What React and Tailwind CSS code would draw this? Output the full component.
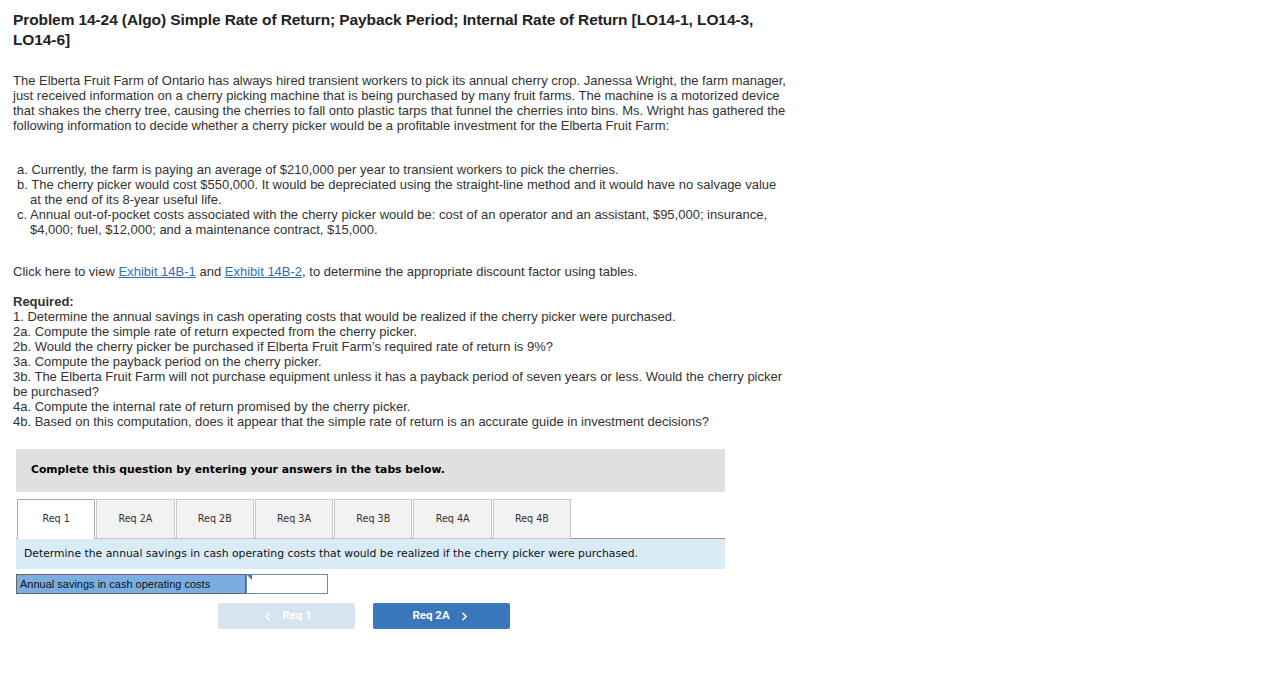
import React from 'react';
import { ChevronLeft, ChevronRight } from 'lucide-react';

const body = { fontFamily: '"Liberation Sans", Arial, sans-serif' };
const verdana = { fontFamily: '"DejaVu Sans", Verdana, sans-serif' };

const tabs = ['Req 1', 'Req 2A', 'Req 2B', 'Req 3A', 'Req 3B', 'Req 4A', 'Req 4B'];

export default function App() {
  return (
    <div className="min-h-[691px] w-[1270px] bg-white text-[#333]" style={body}>
      <div className="w-[795px] pl-[13px] pt-[10px]">
        <h1 className="text-[15.5px] leading-[20px] font-bold tracking-[-0.1px] text-[#222]">
          Problem 14-24 (Algo) Simple Rate of Return; Payback Period; Internal Rate of Return [LO14-1, LO14-3, LO14-6]
        </h1>

        <p className="mt-[23px] text-[13px] leading-[15px]">
          The Elberta Fruit Farm of Ontario has always hired transient workers to pick its annual cherry crop. Janessa Wright, the farm manager,
          just received information on a cherry picking machine that is being purchased by many fruit farms. The machine is a motorized device
          that shakes the cherry tree, causing the cherries to fall onto plastic tarps that funnel the cherries into bins. Ms. Wright has gathered the
          following information to decide whether a cherry picker would be a profitable investment for the Elberta Fruit Farm:
        </p>

        <ol className="mt-[29px] ml-[4px] pr-[10px] text-[13px] leading-[15px]">
          <li className="pl-[13px] -indent-[13px]">a. Currently, the farm is paying an average of $210,000 per year to transient workers to pick the cherries.</li>
          <li className="pl-[13px] -indent-[13px]">b. The cherry picker would cost $550,000. It would be depreciated using the straight-line method and it would have no salvage value at the end of its 8-year useful life.</li>
          <li className="pl-[13px] -indent-[13px]">c. Annual out-of-pocket costs associated with the cherry picker would be: cost of an operator and an assistant, $95,000; insurance, $4,000; fuel, $12,000; and a maintenance contract, $15,000.</li>
        </ol>

        <p className="mt-[27px] text-[13px] leading-[15px]">
          Click here to view <span className="text-[#2d6fb6] underline">Exhibit 14B-1</span> and{' '}
          <span className="text-[#2d6fb6] underline">Exhibit 14B-2</span>, to determine the appropriate discount factor using tables.
        </p>

        <div className="mt-[15px] text-[13px] leading-[15px]">
          <div className="font-bold">Required:</div>
          <div>1. Determine the annual savings in cash operating costs that would be realized if the cherry picker were purchased.</div>
          <div>2a. Compute the simple rate of return expected from the cherry picker.</div>
          <div>2b. Would the cherry picker be purchased if Elberta Fruit Farm’s required rate of return is 9%?</div>
          <div>3a. Compute the payback period on the cherry picker.</div>
          <div>3b. The Elberta Fruit Farm will not purchase equipment unless it has a payback period of seven years or less. Would the cherry picker be purchased?</div>
          <div>4a. Compute the internal rate of return promised by the cherry picker.</div>
          <div>4b. Based on this computation, does it appear that the simple rate of return is an accurate guide in investment decisions?</div>
        </div>
      </div>

      <div className="ml-[16px] mt-[20px] w-[709px]" style={verdana}>
        <div className="flex h-[43px] items-center bg-[#e0e0e0] pl-[15px] text-[10.8px] font-bold text-black">
          Complete this question by entering your answers in the tabs below.
        </div>

        <div className="mt-[7px] flex border-b border-[#999] pl-[1px]">
          {tabs.map((t, i) => (
            <div
              key={t}
              className={`-mb-px mr-[1px] flex h-[40px] w-[78.3px] items-center justify-center border text-[9.6px] text-[#333] ${
                i === 0 ? 'border-[#aaa] border-b-white bg-white' : 'border-[#c8c8c8] bg-[#f2f2f2]'
              }`}
            >
              {t}
            </div>
          ))}
        </div>

        <div className="flex h-[30px] items-center bg-[#daebf8] pl-[8px] text-[10.8px] text-[#111]">
          Determine the annual savings in cash operating costs that would be realized if the cherry picker were purchased.
        </div>

        <div className="mt-[5px] flex h-[20px] w-[312px]">
          <div
            className="flex w-[230px] items-center border border-[#666] bg-[#7aaee3] pl-[3px] text-[11px] text-[#111]"
            style={body}
          >
            Annual savings in cash operating costs
          </div>
          <div className="relative flex-1 border border-[#6a8bb0] bg-white">
            <span className="absolute left-0 top-0 h-0 w-0 border-l-[5px] border-t-[5px] border-l-transparent border-t-[#3a78bd]" />
          </div>
        </div>

        <div className="mt-[9px] flex gap-[18px] pl-[202px]" style={{ fontFamily: 'Roboto, "Liberation Sans", sans-serif' }}>
          <button className="flex h-[26px] w-[137px] items-center justify-center gap-[8px] rounded-[2px] bg-[#d6e3f0] text-[11.5px] font-bold text-white">
            <ChevronLeft size={13} strokeWidth={3} /> Req 1
          </button>
          <button className="flex h-[26px] w-[137px] items-center justify-center gap-[8px] rounded-[2px] bg-[#3a76bb] text-[11.5px] font-bold text-white">
            Req 2A <ChevronRight size={13} strokeWidth={3} />
          </button>
        </div>
      </div>
    </div>
  );
}
